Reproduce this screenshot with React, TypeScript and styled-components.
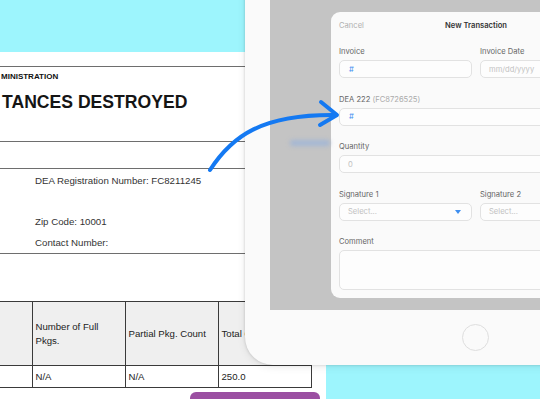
import React from 'react';
import styled, {createGlobalStyle} from 'styled-components';

const GlobalStyle = createGlobalStyle`
    html, body {
        margin: 0;
        padding: 0;
        background: #9df5fd;
    }
`;

const Stage = styled.div`
    position: relative;
    width: 540px;
    height: 399px;
    overflow: hidden;
    background: #9df5fd;
    display: flex;
    align-items: flex-start;
`;

// ---- paper form on the left ----
const Paper = styled.div`
    flex: none;
    width: 326px;
    height: 360px;
    margin-top: 52px;
    background: #fff;
    padding-top: 14px;
    box-sizing: border-box;
    font-family: "Liberation Sans", Arial, sans-serif;
    color: #222;
`;

const Rule = styled.div`
    height: 0;
    border-top: 1.5px solid #6e6e6e;
`;

const TitleBlock = styled.div`
    height: 74px;
    display: flex;
    flex-direction: column;
`;

const Agency = styled.div`
    font-size: 8px;
    font-weight: bold;
    line-height: 10px;
    margin-top: 5px;
    margin-left: 1px;
    color: #111;
`;

const Title = styled.div`
    font-size: 17.6px;
    font-weight: bold;
    line-height: 20px;
    margin-top: 10px;
    margin-left: 2px;
    color: #151515;
`;

const Blank = styled.div<{$h: number}>`
    height: ${p => p.$h}px;
`;

const InfoBlock = styled.div`
    height: 84px;
    padding-left: 35px;
    display: flex;
    flex-direction: column;
`;

const InfoLine = styled.div<{$top: number}>`
    font-size: 9.7px;
    line-height: 11px;
    color: #333;
    margin-top: ${p => p.$top}px;
`;

const Table = styled.table`
    border-collapse: collapse;
    table-layout: fixed;
    width: 311px;
    font-size: 9.6px;
    line-height: 14px;
    color: #222;
    td {
        border: 1.5px solid #3a3a3a;
        padding: 0 3px;
        vertical-align: middle;
        overflow: hidden;
        white-space: nowrap;
    }
    td:first-child {
        border-left: none;
    }
`;

const HeadRow = styled.tr`
    height: 64px;
    background: #efefef;
`;

const BodyRow = styled.tr`
    height: 22px;
    background: #fff;
`;

const PurpleBar = styled.div`
    margin: 4px 0 0 190px;
    width: 130px;
    height: 14px;
    border-radius: 6px;
    background: #9b4fa2;
`;

// ---- tablet on the right ----
const Tablet = styled.div`
    flex: none;
    position: relative;
    z-index: 1;
    margin-left: -81px;
    margin-top: -60px;
    width: 460px;
    height: 425px;
    box-sizing: border-box;
    padding: 55px 25px 0;
    background: #fafafa;
    border-radius: 28px;
    box-shadow: 0 0 3px rgba(0, 0, 0, 0.18), 0 2px 8px rgba(0, 0, 0, 0.08);
    display: flex;
    flex-direction: column;
`;

const Screen = styled.div`
    height: 315px;
    background: #c4c4c4;
    display: flex;
    padding: 17px 0 12px;
    box-sizing: border-box;
`;

const Backdrop = styled.div`
    width: 61px;
    flex: none;
    padding: 128px 0 0 20px;
    box-sizing: border-box;
`;

const Smudge = styled.div`
    width: 40px;
    height: 6px;
    border-radius: 3px;
    background: #a4b7d4;
    filter: blur(2px);
`;

const HomeBar = styled.div`
    flex: 1;
    display: flex;
    align-items: center;
    justify-content: center;
`;

const HomeButton = styled.div`
    width: 25px;
    height: 25px;
    border-radius: 50%;
    border: 1px solid #dedede;
    background: #fafafa;
`;

const Modal = styled.div`
    width: 290px;
    flex: none;
    background: #fafafa;
    border-radius: 9px;
    padding: 0 8px;
    box-sizing: border-box;
    font-family: Inter, "Liberation Sans", sans-serif;
`;

const ModalHeader = styled.div`
    height: 26px;
    display: grid;
    grid-template-columns: 1fr auto 1fr;
    align-items: center;
    font-size: 7.6px;
`;

const Cancel = styled.span`
    color: #b0b0b0;
`;

const ModalTitle = styled.span`
    color: #333;
    font-weight: 600;
`;

const Form = styled.div`
    padding-top: 8px;
    display: flex;
    flex-direction: column;
    gap: 15.5px;
`;

const Row = styled.div`
    display: grid;
    grid-template-columns: 1fr 1fr;
    gap: 8px;
`;

const Field = styled.div`
    display: flex;
    flex-direction: column;
    gap: 2px;
`;

const Label = styled.div`
    font-size: 7.6px;
    line-height: 12px;
    color: #666;
    white-space: nowrap;
`;

const Muted = styled.span`
    color: #aaa;
`;

const Input = styled.div<{$tall?: boolean}>`
    height: ${p => (p.$tall ? 40 : 18)}px;
    box-sizing: border-box;
    border: 1px solid #e2e2e2;
    border-radius: 5px;
    background: #fdfdfd;
    display: flex;
    align-items: ${p => (p.$tall ? 'flex-start' : 'center')};
    justify-content: space-between;
    padding: 0 8px;
    font-size: 7.6px;
`;

const Hash = styled.span`
    color: #3f8ff0;
    padding-left: 1px;
`;

const Placeholder = styled.span`
    color: #c2c2c2;
`;

const Caret = styled.span`
    width: 0;
    height: 0;
    border-left: 3px solid transparent;
    border-right: 3px solid transparent;
    border-top: 4px solid #3f8ff0;
    margin-right: 2px;
`;

const ArrowLayer = styled.svg`
    position: absolute;
    left: 0;
    top: 0;
    z-index: 2;
    pointer-events: none;
`;

const App: React.FunctionComponent = () => {
    return (
        <>
            <GlobalStyle/>
            <Stage>
                <Paper>
                    <Rule/>
                    <TitleBlock>
                        <Agency>MINISTRATION</Agency>
                        <Title>TANCES DESTROYED</Title>
                    </TitleBlock>
                    <Rule/>
                    <Blank $h={26}/>
                    <Rule/>
                    <InfoBlock>
                        <InfoLine $top={6}>DEA Registration Number: FC8211245</InfoLine>
                        <InfoLine $top={30}>Zip Code: 10001</InfoLine>
                        <InfoLine $top={10}>Contact Number:</InfoLine>
                    </InfoBlock>
                    <Rule/>
                    <Blank $h={47}/>
                    <Table>
                        <colgroup>
                            <col style={{width: 32}}/>
                            <col style={{width: 93}}/>
                            <col style={{width: 93}}/>
                            <col style={{width: 93}}/>
                        </colgroup>
                        <tbody>
                        <HeadRow>
                            <td/>
                            <td>Number of Full<br/>Pkgs.</td>
                            <td>Partial Pkg. Count</td>
                            <td>Total Quantity</td>
                        </HeadRow>
                        <BodyRow>
                            <td/>
                            <td>N/A</td>
                            <td>N/A</td>
                            <td>250.0</td>
                        </BodyRow>
                        </tbody>
                    </Table>
                    <PurpleBar/>
                </Paper>

                <Tablet>
                    <Screen>
                        <Backdrop><Smudge/></Backdrop>
                        <Modal>
                            <ModalHeader>
                                <Cancel>Cancel</Cancel>
                                <ModalTitle>New Transaction</ModalTitle>
                                <span/>
                            </ModalHeader>
                            <Form>
                                <Row>
                                    <Field>
                                        <Label>Invoice</Label>
                                        <Input><Hash>#</Hash></Input>
                                    </Field>
                                    <Field>
                                        <Label>Invoice Date</Label>
                                        <Input><Placeholder>mm/dd/yyyy</Placeholder></Input>
                                    </Field>
                                </Row>
                                <Field>
                                    <Label>DEA 222 <Muted>(FC8726525)</Muted></Label>
                                    <Input><Hash>#</Hash></Input>
                                </Field>
                                <Field>
                                    <Label>Quantity</Label>
                                    <Input><Placeholder>0</Placeholder></Input>
                                </Field>
                                <Row>
                                    <Field>
                                        <Label>Signature 1</Label>
                                        <Input><Placeholder>Select...</Placeholder><Caret/></Input>
                                    </Field>
                                    <Field>
                                        <Label>Signature 2</Label>
                                        <Input><Placeholder>Select...</Placeholder><Caret/></Input>
                                    </Field>
                                </Row>
                                <Field>
                                    <Label>Comment</Label>
                                    <Input $tall/>
                                </Field>
                            </Form>
                        </Modal>
                    </Screen>
                    <HomeBar><HomeButton/></HomeBar>
                </Tablet>

                <ArrowLayer width="540" height="399" viewBox="0 0 540 399">
                    <g fill="none" stroke="#1479f2" strokeWidth="4" strokeLinecap="round" strokeLinejoin="round">
                        <path d="M210 170 C 232 136, 262 114, 336 115"/>
                        <path d="M321 102 L 337 115 L 320 125"/>
                    </g>
                </ArrowLayer>
            </Stage>
        </>
    );
};

export default App;
